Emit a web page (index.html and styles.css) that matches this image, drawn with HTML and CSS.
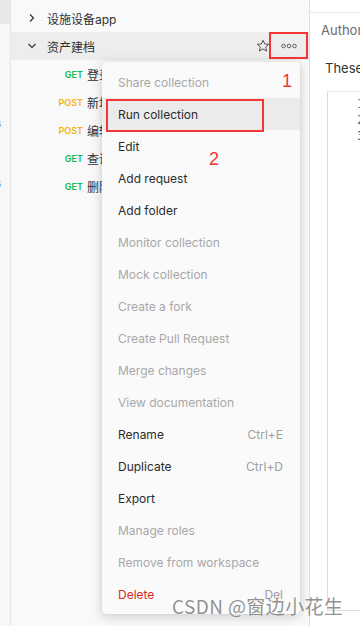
FILE: index.html
```html
<!DOCTYPE html>
<html lang="zh-CN">
<head>
    <meta charset="UTF-8">
    <title>Collections</title>
    <link rel="stylesheet" href="styles.css">
</head>
<body>
<div class="app">
    <div class="rail">
        <div class="rail-top"></div>
        <span class="rail-bit bit-1">s</span>
        <span class="rail-bit bit-2">s</span>
    </div>
    <div class="sidebar">
        <div class="row">
            <svg class="chev" width="10" height="10" viewBox="0 0 10 10"><path d="M3 1.5 L6.5 5 L3 8.5" fill="none" stroke="#333" stroke-width="1.2"/></svg>
            <span class="name">设施设备app</span>
        </div>
        <div class="row active">
            <svg class="chev" width="10" height="10" viewBox="0 0 10 10"><path d="M1.5 3 L5 6.5 L8.5 3" fill="none" stroke="#333" stroke-width="1.2"/></svg>
            <span class="name">资产建档</span>
            <svg class="star" width="14" height="14" viewBox="0 0 14 14"><path d="M7 1.2 L8.7 5 L12.8 5.3 L9.7 8 L10.6 12.1 L7 9.9 L3.4 12.1 L4.3 8 L1.2 5.3 L5.3 5 Z" fill="none" stroke="#555" stroke-width="1"/></svg>
            <svg class="dots" width="16" height="6" viewBox="0 0 16 6"><circle cx="2.5" cy="3" r="1.8" fill="none" stroke="#555" stroke-width="0.9"/><circle cx="8" cy="3" r="1.8" fill="none" stroke="#555" stroke-width="0.9"/><circle cx="13.5" cy="3" r="1.8" fill="none" stroke="#555" stroke-width="0.9"/></svg>
        </div>
        <div class="req"><span class="method get">GET</span><span class="name">登录接口</span></div>
        <div class="req"><span class="method post">POST</span><span class="name">新增资产</span></div>
        <div class="req"><span class="method post">POST</span><span class="name">编辑资产</span></div>
        <div class="req"><span class="method get">GET</span><span class="name">查询资产</span></div>
        <div class="req"><span class="method get">GET</span><span class="name">删除资产</span></div>
    </div>
    <div class="main">
        <div class="main-top"></div>
        <div class="author">Authorization</div>
        <div class="desc">These parameters</div>
        <div class="code">
            <div class="ln">1</div>
            <div class="ln">2</div>
            <div class="ln">3</div>
        </div>
    </div>

    <div class="menu">
        <div class="item off">Share collection</div>
        <div class="item hover">Run collection</div>
        <div class="item">Edit</div>
        <div class="item">Add request</div>
        <div class="item">Add folder</div>
        <div class="item off">Monitor collection</div>
        <div class="item off">Mock collection</div>
        <div class="item off">Create a fork</div>
        <div class="item off">Create Pull Request</div>
        <div class="item off">Merge changes</div>
        <div class="item off">View documentation</div>
        <div class="item">Rename<span class="key">Ctrl+E</span></div>
        <div class="item">Duplicate<span class="key">Ctrl+D</span></div>
        <div class="item">Export</div>
        <div class="item off">Manage roles</div>
        <div class="item off">Remove from workspace</div>
        <div class="item danger">Delete<span class="key">Del</span></div>
    </div>

    <div class="mark box-1"></div>
    <div class="mark box-2"></div>
    <span class="num num-1">1</span>
    <span class="num num-2">2</span>
    <span class="watermark">CSDN @窗边小花生</span>
</div>
</body>
</html>
```
FILE: styles.css
```css
body {
    margin: 0;
    font-family: Inter, "Noto Sans CJK SC", sans-serif;
    font-size: 12px;
    color: #333;
    background: #fff;
}
.app {
    position: relative;
    display: flex;
    width: 360px;
    height: 626px;
    overflow: hidden;
}
.rail {
    position: relative;
    flex-shrink: 0;
    width: 10px;
    background: #f7f7f7;
    border-right: 1px solid #e6e6e6;
    overflow: hidden;
}
.rail-top {
    height: 24px;
    background: #e8e8e8;
}
.rail-bit {
    position: absolute;
    left: -4px;
    font-size: 10px;
    color: #6a8fb0;
}
.bit-1 { top: 117px; }
.bit-2 { top: 177px; }
.sidebar {
    flex-shrink: 0;
    width: 298px;
    padding-top: 4px;
    background: #f9f9f9;
}
.row {
    display: flex;
    align-items: center;
    height: 28px;
    padding-left: 16px;
}
.row.active {
    background: #ededed;
}
.chev {
    margin-right: 10px;
}
.row .name {
    font-size: 12px;
    color: #303030;
}
.star {
    margin-left: auto;
}
.dots {
    margin-left: 11px;
    margin-right: 12px;
}
.req {
    display: flex;
    align-items: center;
    height: 28px;
}
.method {
    width: 72px;
    text-align: right;
    font-size: 9px;
    font-weight: 600;
}
.get { color: #0cbb52; }
.post { color: #f5b400; }
.req .name {
    margin-left: 4px;
    font-size: 12px;
    color: #303030;
}
.main {
    flex: 1;
    min-width: 0;
    overflow: hidden;
    border-left: 1px solid #e0e0e0;
    background: #fff;
}
.main-top {
    height: 12px;
    border-bottom: 1px solid #e6e6e6;
}
.author {
    margin: 9px 0 0 11px;
    font-size: 13px;
    color: #6b6b6b;
    white-space: nowrap;
}
.desc {
    margin: 22px 0 0 15px;
    font-size: 13px;
    color: #333;
    white-space: nowrap;
}
.code {
    margin: 15px 0 0 17px;
    height: 514px;
    padding-top: 4px;
    border-left: 1px solid #dcdcdc;
    border-top: 1px solid #eee;
    border-bottom: 1px solid #dcdcdc;
}
.ln {
    height: 16px;
    line-height: 16px;
    padding-left: 29px;
    font-family: "DejaVu Sans Mono", monospace;
    font-size: 12px;
    color: #237893;
}
.menu {
    position: absolute;
    left: 102px;
    top: 62px;
    width: 198px;
    padding: 4px 0;
    background: #fafafa;
    border-radius: 4px;
    box-shadow: 0 2px 12px rgba(0, 0, 0, 0.2), 0 0 1px rgba(0, 0, 0, 0.12);
}
.item {
    display: flex;
    align-items: center;
    height: 32px;
    padding: 0 17px 0 16px;
    font-size: 12px;
    color: #2b2b2b;
}
.item.off { color: #a8a8a8; }
.item.hover { background: #ebebeb; }
.item.danger { color: #d62b2b; }
.key {
    margin-left: auto;
    color: #9e9e9e;
}
.mark {
    position: absolute;
    border: 2px solid #f33535;
}
.box-1 {
    left: 269px;
    top: 32px;
    width: 35px;
    height: 23px;
}
.box-2 {
    left: 106px;
    top: 99px;
    width: 154px;
    height: 29px;
}
.num {
    position: absolute;
    font-family: "Liberation Sans", sans-serif;
    font-size: 18px;
    color: #f33535;
}
.num-1 { left: 282px; top: 71px; }
.num-2 { left: 209px; top: 149px; }
.watermark {
    position: absolute;
    left: 172px;
    top: 592px;
    font-family: "Noto Sans CJK SC", sans-serif;
    font-size: 19px;
    line-height: 28px;
    letter-spacing: 0.4px;
    color: rgba(110, 110, 110, 0.75);
    text-shadow: 0 0 2px #fff;
    white-space: nowrap;
}
```
